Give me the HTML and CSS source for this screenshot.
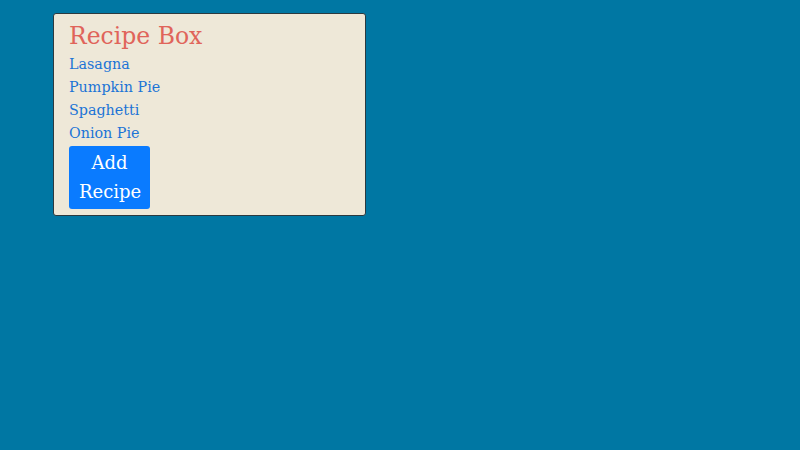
FILE: index.html
```html
<!DOCTYPE html>
<html>
<head>
<meta charset="utf-8">
<link rel="stylesheet" href="styles.css">
</head>
<body>
<div class="page">
  <div class="card">
    <h1 class="title">Recipe Box</h1>
    <ul class="list">
      <li><a class="item" href="#">Lasagna</a></li>
      <li><a class="item" href="#">Pumpkin Pie</a></li>
      <li><a class="item" href="#">Spaghetti</a></li>
      <li><a class="item" href="#">Onion Pie</a></li>
    </ul>
    <button class="add">Add<br>Recipe</button>
  </div>
</div>
</body>
</html>
```
FILE: styles.css
```css
html, body {
  margin: 0;
  padding: 0;
  background: #0077a3;
  height: 100%;
}
body {
  font-family: "DejaVu Serif", "Liberation Serif", serif;
}
.page {
  padding: 13px 0 0 53px;
}
.card {
  box-sizing: border-box;
  width: 313px;
  background: #eee8d8;
  border: 1px solid #2b3a40;
  border-radius: 3px;
  padding: 5px 15px 6px 15px;
}
.title {
  margin: 0;
  font-weight: normal;
  font-size: 23.5px;
  line-height: 34px;
  color: #e0645a;
}
.list {
  list-style: none;
  margin: 0;
  padding: 0;
}
.list li {
  font-size: 14.3px;
  line-height: 23px;
}
.item {
  color: #1c74d6;
  text-decoration: none;
}
.add {
  margin-top: 1px;
  display: block;
  background: #0a7bff;
  color: #fff;
  border: none;
  border-radius: 3px;
  font-family: inherit;
  font-size: 18px;
  line-height: 29px;
  padding: 2px 10px 3px;
  width: 81px;
}
```
